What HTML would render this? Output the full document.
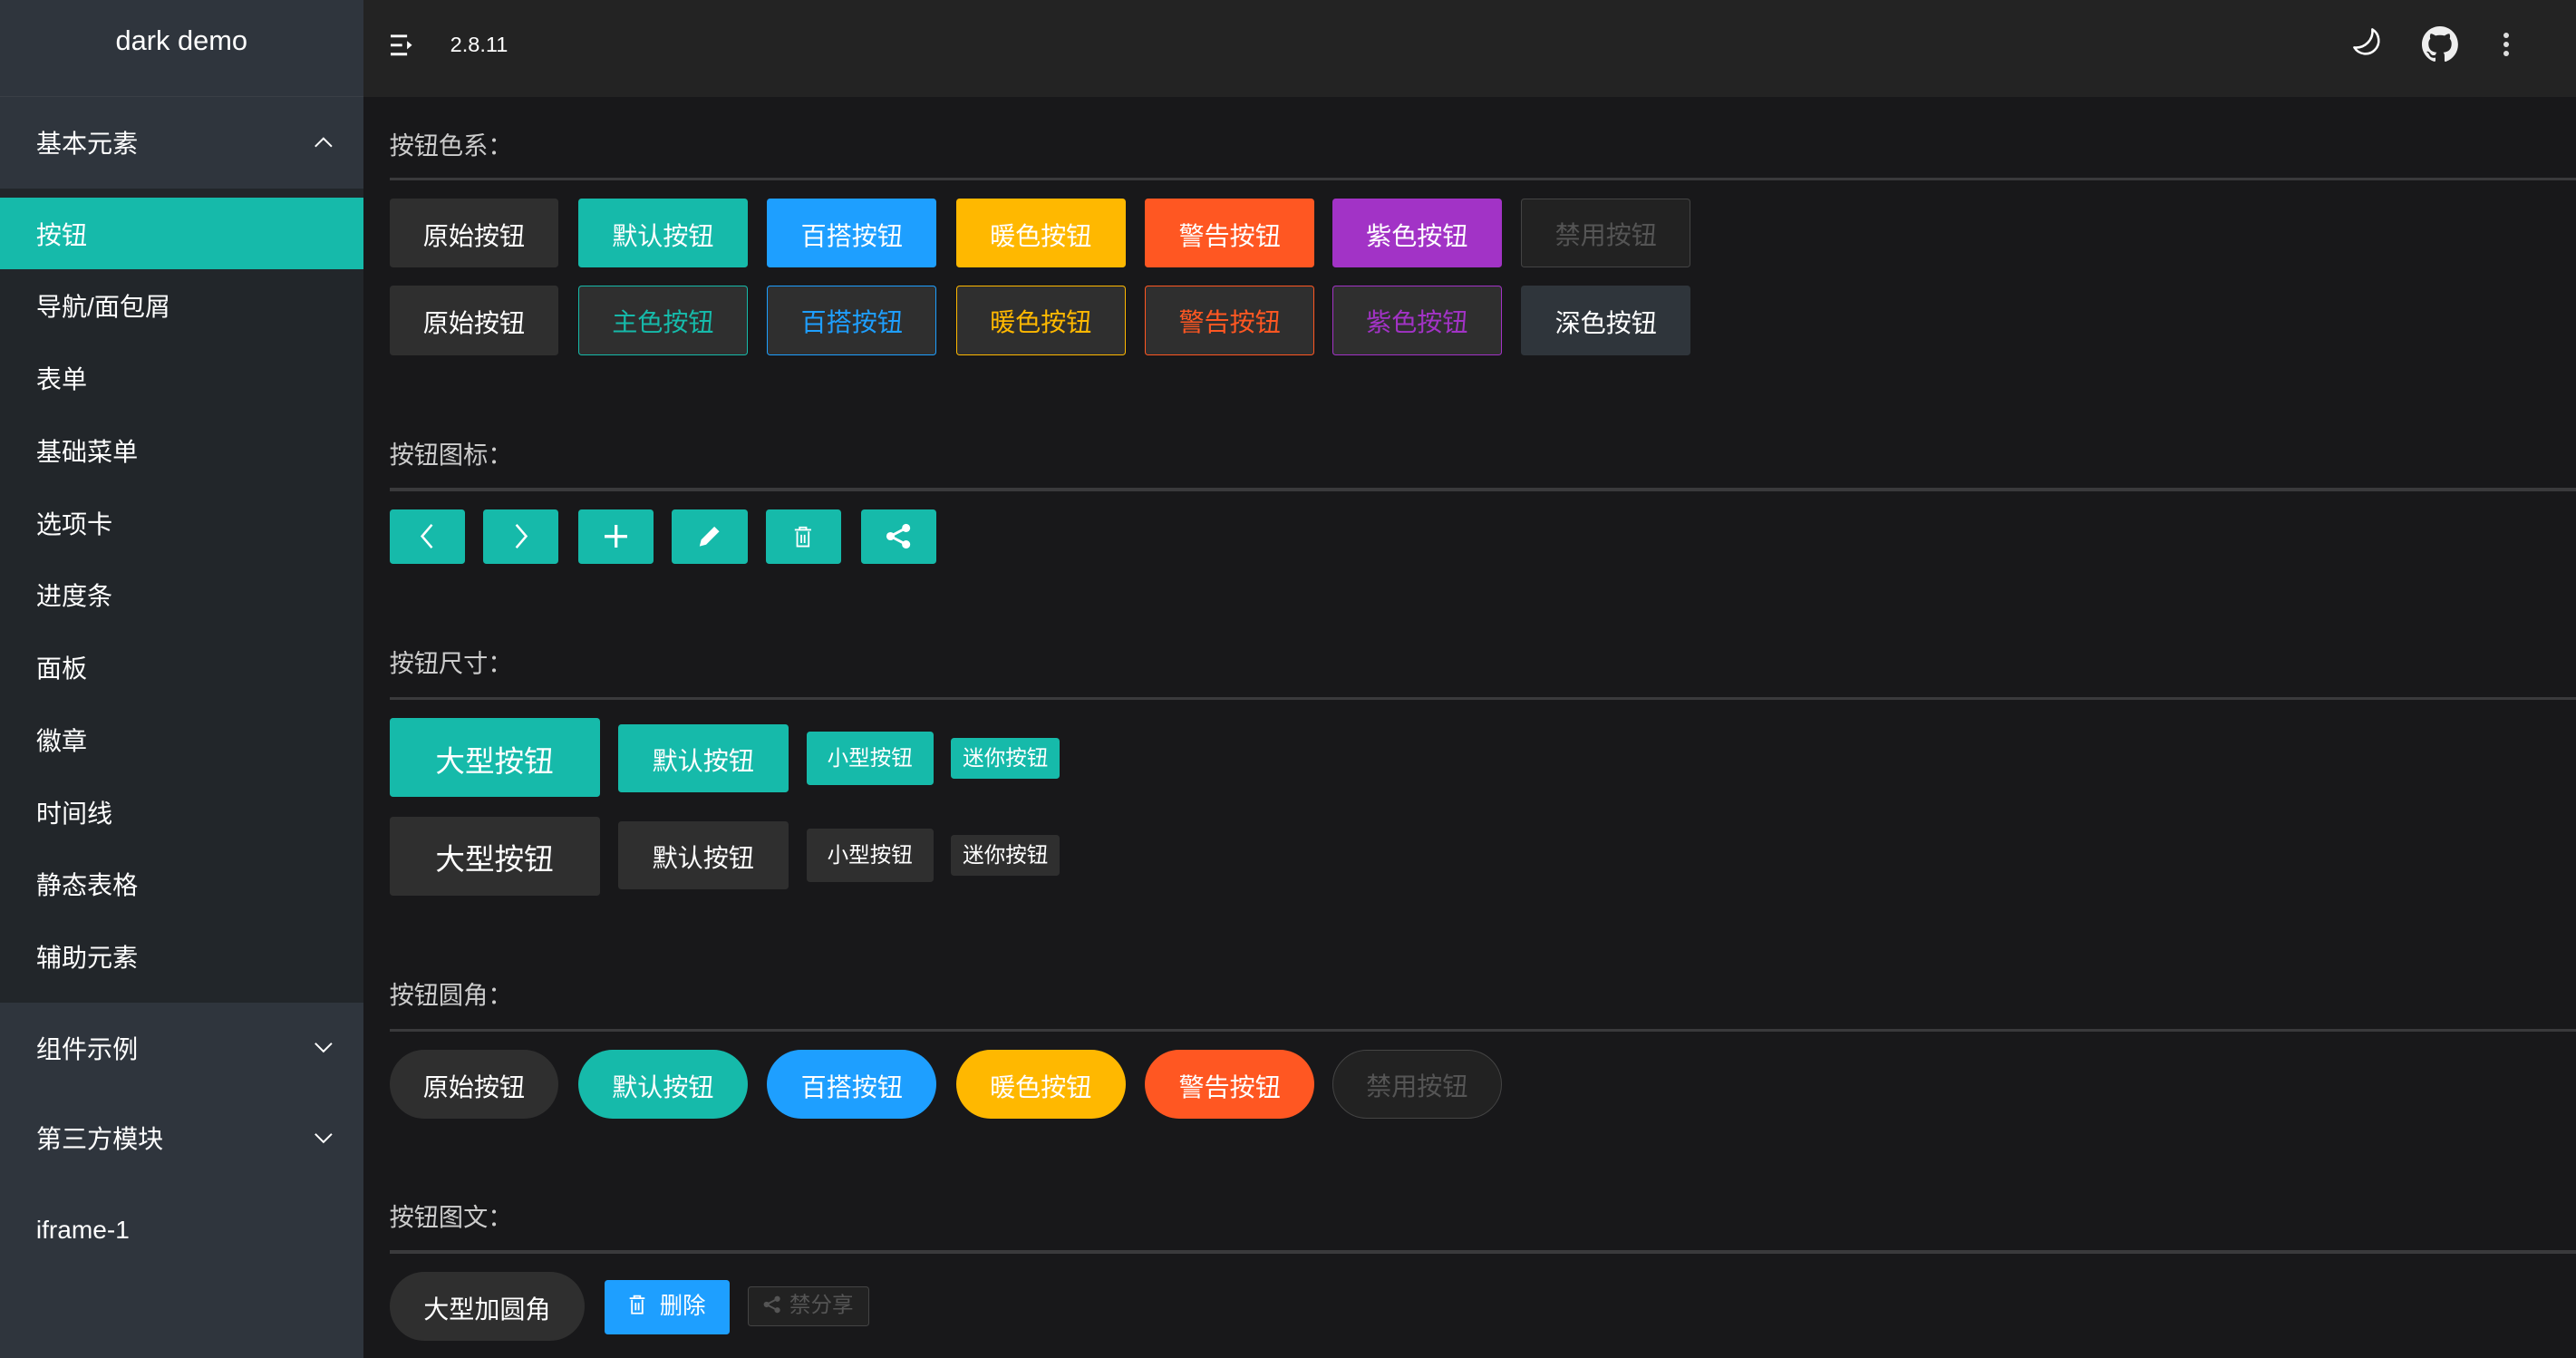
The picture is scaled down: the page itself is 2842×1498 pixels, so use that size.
<!DOCTYPE html>
<html><head><meta charset="utf-8"><style>
*{margin:0;padding:0;box-sizing:border-box}
html,body{width:2842px;height:1498px;overflow:hidden;background:#18181a}
#r{zoom:1.8125;width:1568px;height:827px;position:relative;font-family:"Liberation Sans","Noto Sans CJK SC",sans-serif;color:#fff}
.side{position:absolute;left:0;top:0;width:221px;height:827px;background:#2f353d}
.logo{height:59px;line-height:50px;text-align:center;font-size:17px;color:#fff;border-bottom:1px solid #3a3f46}
.grp{height:56px;padding-left:22px;line-height:57px;font-size:15.5px;position:relative}
.grp svg{position:absolute;right:18px;top:23px}
.sub{background:#22262a;padding:5px 0 0;height:495px}
.it{height:44px;line-height:46px;padding-left:22px;font-size:15.5px}
.it.on{background:#16baaa}
.hd{position:absolute;left:221px;top:0;right:0;height:59px;background:#232323}
.ttl{position:absolute;left:237px;font-size:15px;color:#ccc}
.ln{position:absolute;left:237px;right:0;height:2px;background:#3a3a3c}
.b{position:absolute;height:42px;width:103px;border-radius:2px;font-size:15.5px;text-align:center;line-height:42px;padding-top:2px;color:#fff;background:#2f2f2f}
.sm{padding-top:0}
.t{background:#16baaa}.bl{background:#1e9fff}.o{background:#ffb800}.rd{background:#ff5722}.p{background:#a233c6}
.dis{background:#222;border:1px solid #444;color:#555;line-height:40px}
.ob{border:1px solid;line-height:40px;background:#2f2f2f}
.ib{position:absolute;top:310px;width:46px;height:33px;background:#16baaa;border-radius:2px;display:flex;align-items:center;justify-content:center}
.rr{border-radius:21px}
</style></head><body><div id="r">
<div class="side">
<div class="logo">dark demo</div>
<div class="grp">基本元素<svg width="12" height="8" viewBox="0 0 12 8"><path d="M1 7L6 2L11 7" stroke="#fff" fill="none" stroke-width="1.1"/></svg></div>
<div class="sub">
<div class="it on">按钮</div><div class="it">导航/面包屑</div><div class="it">表单</div><div class="it">基础菜单</div><div class="it">选项卡</div><div class="it">进度条</div><div class="it">面板</div><div class="it">徽章</div><div class="it">时间线</div><div class="it">静态表格</div><div class="it">辅助元素</div>
</div>
<div class="grp" style="height:55px;line-height:57px">组件示例<svg width="12" height="8" viewBox="0 0 12 8" style="top:24px"><path d="M1 1L6 6L11 1" stroke="#fff" fill="none" stroke-width="1.1"/></svg></div>
<div class="grp" style="height:55px;line-height:57px">第三方模块<svg width="12" height="8" viewBox="0 0 12 8" style="top:24px"><path d="M1 1L6 6L11 1" stroke="#fff" fill="none" stroke-width="1.1"/></svg></div>
<div class="grp" style="height:55px;line-height:57px">iframe-1</div>
</div>
<div class="hd">
<svg style="position:absolute;left:17px;top:21px" width="14" height="13" viewBox="0 0 14 13"><path d="M0 1H10M0 6.5H7M0 12H10" stroke="#fff" stroke-width="1.6"/><path d="M10 4L13 6.5L10 9Z" fill="#fff"/></svg>
<div style="position:absolute;left:53px;top:20px;font-size:13px">2.8.11</div>
<svg style="position:absolute;left:1209px;top:15px" width="22" height="22" viewBox="0 0 22 22"><path d="M14 3A8 8 0 1 1 3 14A10 10 0 0 0 14 3Z" stroke="#fff" fill="none" stroke-width="1.4" stroke-linejoin="round"/></svg>
<svg style="position:absolute;left:1253px;top:16px" width="22" height="22" viewBox="0 0 16 16"><path fill="#eee" d="M8 0C3.58 0 0 3.58 0 8c0 3.54 2.29 6.53 5.47 7.59.4.07.55-.17.55-.38v-1.33c-2.23.48-2.7-1.07-2.7-1.07-.36-.92-.89-1.17-.89-1.17-.73-.5.06-.49.06-.49.8.06 1.23.83 1.23.83.72 1.22 1.87.87 2.33.66.07-.52.28-.87.51-1.07-1.78-.2-3.64-.89-3.64-3.95 0-.87.31-1.59.82-2.15-.08-.2-.36-1.02.08-2.12 0 0 .67-.21 2.2.82a7.6 7.6 0 0 1 4 0c1.53-1.04 2.2-.82 2.2-.82.44 1.1.16 1.92.08 2.12.51.56.82 1.27.82 2.15 0 3.07-1.87 3.75-3.65 3.95.29.25.54.73.54 1.48v2.2c0 .21.15.46.55.38A8 8 0 0 0 16 8c0-4.42-3.58-8-8-8z"/></svg>
<div style="position:absolute;left:1303px;top:20px;width:3px"><div style="width:3px;height:3px;border-radius:2px;background:#ddd;margin-bottom:2.5px"></div><div style="width:3px;height:3px;border-radius:2px;background:#ddd;margin-bottom:2.5px"></div><div style="width:3px;height:3px;border-radius:2px;background:#ddd"></div></div>
</div>

<div class="ttl" style="top:76px">按钮色系：</div><div class="ln" style="top:108px"></div>
<div class="b" style="left:237px;top:121px">原始按钮</div>
<div class="b t" style="left:352px;top:121px">默认按钮</div>
<div class="b bl" style="left:467px;top:121px">百搭按钮</div>
<div class="b o" style="left:582px;top:121px">暖色按钮</div>
<div class="b rd" style="left:697px;top:121px">警告按钮</div>
<div class="b p" style="left:811px;top:121px">紫色按钮</div>
<div class="b dis" style="left:926px;top:121px">禁用按钮</div>
<div class="b" style="left:237px;top:174px">原始按钮</div>
<div class="b ob" style="left:352px;top:174px;border-color:#16baaa;color:#16baaa">主色按钮</div>
<div class="b ob" style="left:467px;top:174px;border-color:#1e9fff;color:#1e9fff">百搭按钮</div>
<div class="b ob" style="left:582px;top:174px;border-color:#ffb800;color:#ffb800">暖色按钮</div>
<div class="b ob" style="left:697px;top:174px;border-color:#ff5722;color:#ff5722">警告按钮</div>
<div class="b ob" style="left:811px;top:174px;border-color:#a233c6;color:#a233c6">紫色按钮</div>
<div class="b" style="left:926px;top:174px;background:#2f353b">深色按钮</div>

<div class="ttl" style="top:264px">按钮图标：</div><div class="ln" style="top:297px"></div>
<div class="ib" style="left:237px"><svg width="10" height="16" viewBox="0 0 10 16"><path d="M8 1L2 8L8 15" stroke="#fff" fill="none" stroke-width="1.4"/></svg></div>
<div class="ib" style="left:294px"><svg width="10" height="16" viewBox="0 0 10 16"><path d="M2 1L8 8L2 15" stroke="#fff" fill="none" stroke-width="1.4"/></svg></div>
<div class="ib" style="left:352px"><svg width="14" height="14" viewBox="0 0 14 14"><path d="M7 0V14M0 7H14" stroke="#fff" stroke-width="1.8"/></svg></div>
<div class="ib" style="left:409px"><svg width="14" height="14" viewBox="0 0 14 14"><path d="M10 1L13 4L5 12L1 13L2 9Z" fill="#fff"/></svg></div>
<div class="ib" style="left:466px"><svg width="12" height="14" viewBox="0 0 12 14"><path d="M1 3H11M4 3V1.5H8V3M2.5 4V13H9.5V4M5 6V11M7 6V11" stroke="#fff" fill="none" stroke-width="1"/></svg></div>
<div class="ib" style="left:524px"><svg width="16" height="16" viewBox="0 0 16 16"><circle cx="12.5" cy="3" r="2.5" fill="#fff"/><circle cx="12.5" cy="13" r="2.5" fill="#fff"/><circle cx="3" cy="8" r="2.5" fill="#fff"/><path d="M12.5 3L3 8L12.5 13" stroke="#fff" stroke-width="1.6" fill="none"/></svg></div>

<div class="ttl" style="top:391px">按钮尺寸：</div><div class="ln" style="top:424px"></div>
<div class="b t" style="left:237px;top:437px;width:128px;height:48px;line-height:48px;font-size:18px">大型按钮</div>
<div class="b t" style="left:376px;top:441px;width:104px;height:41px;line-height:41px">默认按钮</div>
<div class="b t sm" style="left:491px;top:445px;width:77px;height:33px;line-height:33px;font-size:13px">小型按钮</div>
<div class="b t sm" style="left:579px;top:449px;width:66px;height:25px;line-height:25px;font-size:13px">迷你按钮</div>
<div class="b" style="left:237px;top:497px;width:128px;height:48px;line-height:48px;font-size:18px">大型按钮</div>
<div class="b" style="left:376px;top:500px;width:104px;height:41px;line-height:41px">默认按钮</div>
<div class="b sm" style="left:491px;top:504px;width:77px;height:33px;line-height:33px;font-size:13px">小型按钮</div>
<div class="b sm" style="left:579px;top:508px;width:66px;height:25px;line-height:25px;font-size:13px">迷你按钮</div>

<div class="ttl" style="top:593px">按钮圆角：</div><div class="ln" style="top:626px"></div>
<div class="b rr" style="left:237px;top:639px">原始按钮</div>
<div class="b t rr" style="left:352px;top:639px">默认按钮</div>
<div class="b bl rr" style="left:467px;top:639px">百搭按钮</div>
<div class="b o rr" style="left:582px;top:639px">暖色按钮</div>
<div class="b rd rr" style="left:697px;top:639px">警告按钮</div>
<div class="b dis rr" style="left:811px;top:639px">禁用按钮</div>

<div class="ttl" style="top:728px">按钮图文：</div><div class="ln" style="top:761px"></div>
<div class="b rr" style="left:237px;top:774px;width:119px">大型加圆角</div>
<div class="b bl sm" style="left:368px;top:779px;width:76px;height:33px;line-height:33px;font-size:14px"><svg width="11" height="13" viewBox="0 0 12 14" style="vertical-align:-1px;margin-right:8px"><path d="M1 3H11M4 3V1.5H8V3M2.5 4V13H9.5V4M5 6V11M7 6V11" stroke="#fff" fill="none" stroke-width="1.1"/></svg>删除</div>
<div class="b dis sm" style="left:455px;top:783px;width:74px;height:24px;line-height:22px;font-size:13px"><svg width="11" height="11" viewBox="0 0 16 16" style="vertical-align:-1px;margin-right:5px"><circle cx="12.5" cy="3" r="2.5" fill="#555"/><circle cx="12.5" cy="13" r="2.5" fill="#555"/><circle cx="3" cy="8" r="2.5" fill="#555"/><path d="M12.5 3L3 8L12.5 13" stroke="#555" stroke-width="1.6" fill="none"/></svg>禁分享</div>
</div></body></html>
